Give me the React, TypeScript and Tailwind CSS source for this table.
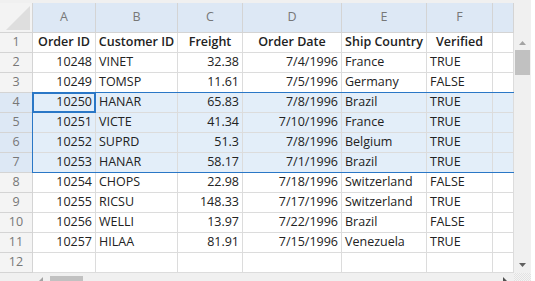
import React from "react";

type Align = "l" | "r" | "c";

const cols = [
  { key: "A", w: "w-[63px]" },
  { key: "B", w: "w-[82px]" },
  { key: "C", w: "w-[65px]" },
  { key: "D", w: "w-[99px]" },
  { key: "E", w: "w-[85px]" },
  { key: "F", w: "w-[66px]" },
  { key: "", w: "w-[21px]" },
];

const aligns: Align[] = ["r", "l", "r", "r", "l", "l", "l"];

const rows: string[][] = [
  ["Order ID", "Customer ID", "Freight", "Order Date", "Ship Country", "Verified", ""],
  ["10248", "VINET", "32.38", "7/4/1996", "France", "TRUE", ""],
  ["10249", "TOMSP", "11.61", "7/5/1996", "Germany", "FALSE", ""],
  ["10250", "HANAR", "65.83", "7/8/1996", "Brazil", "TRUE", ""],
  ["10251", "VICTE", "41.34", "7/10/1996", "France", "TRUE", ""],
  ["10252", "SUPRD", "51.3", "7/8/1996", "Belgium", "TRUE", ""],
  ["10253", "HANAR", "58.17", "7/1/1996", "Brazil", "TRUE", ""],
  ["10254", "CHOPS", "22.98", "7/18/1996", "Switzerland", "FALSE", ""],
  ["10255", "RICSU", "148.33", "7/17/1996", "Switzerland", "TRUE", ""],
  ["10256", "WELLI", "13.97", "7/22/1996", "Brazil", "FALSE", ""],
  ["10257", "HILAA", "81.91", "7/15/1996", "Venezuela", "TRUE", ""],
  ["", "", "", "", "", "", ""],
];

const alignClass = { l: "justify-start pl-[3px]", r: "justify-end pr-[3px]", c: "justify-center" };

function CornerCell() {
  return (
    <div className="w-[33px] h-[30px] shrink-0 bg-[#f3f3f3] border-r border-b border-[#d4d4d4] relative">
      <svg className="absolute right-[2px] bottom-[2px]" width="24" height="24" viewBox="0 0 24 24">
        <polygon points="0,24 24,0 24,24" fill="#dedede" />
      </svg>
    </div>
  );
}

export default function App() {
  return (
    <div className="w-[535px] h-[281px] overflow-hidden bg-white flex flex-col text-[12.5px] text-[#222]" style={{ fontFamily: '"Segoe UI", "Open Sans", "Noto Sans", sans-serif' }}>
      <div className="h-[3px] w-[531px] bg-[#f0f0f0] shrink-0" />
      <div className="flex">
        <div className="flex flex-col w-[514px]">
          {/* column headers */}
          <div className="flex">
            <CornerCell />
            {cols.map((c, i) => (
              <div
                key={i}
                className={`${c.w} h-[30px] shrink-0 bg-[#dde8f5] border-r border-b border-[#d4d4d4] flex items-center justify-center text-[#777]`}
              >
                {c.key}
              </div>
            ))}
          </div>

          {/* body */}
          <div className="relative">
            {rows.map((r, ri) => {
              const n = ri + 1;
              const sel = n >= 4 && n <= 7;
              return (
                <div key={ri} className="flex">
                  <div
                    className={`w-[33px] h-[20px] shrink-0 border-r border-b border-[#d4d4d4] flex items-center justify-center text-[#777] ${
                      sel ? "bg-[#dde8f5]" : "bg-[#f4f4f4]"
                    }`}
                  >
                    {n}
                  </div>
                  {cols.map((c, ci) => (
                    <div
                      key={ci}
                      className={`${c.w} h-[20px] shrink-0 border-r border-b border-[#dcdcdc] flex items-center whitespace-nowrap overflow-hidden ${
                        n === 1 ? "justify-center font-semibold" : alignClass[aligns[ci]]
                      } ${sel ? "bg-[#e3eef9]" : ""}`}
                    >
                      {r[ci]}
                    </div>
                  ))}
                </div>
              );
            })}
            {/* selection range outline, runs on past the right edge */}
            <div className="absolute left-[32px] top-[59px] w-[482px] h-[81px] border-l border-t border-b border-[#2a77c6] pointer-events-none" />
            {/* active cell */}
            <div className="absolute left-[32px] top-[59px] w-[64px] h-[21px] border-2 border-[#2a77c6] pointer-events-none" />
          </div>

          {/* horizontal scrollbar */}
          <div className="h-[9px] bg-[#f0f0f0] relative">
            <svg className="absolute left-[38px] top-[4px]" width="5" height="5" viewBox="0 0 5 5">
              <polygon points="5,0 5,5 0,5" fill="#a3a3a3" />
            </svg>
            <div className="absolute left-[50px] top-[3px] w-[33px] h-[6px] bg-[#c1c1c1]" />
            <svg className="absolute left-[503px] top-[4px]" width="5" height="5" viewBox="0 0 5 5">
              <polygon points="0,0 5,5 0,5" fill="#505050" />
            </svg>
          </div>
        </div>

        {/* vertical scrollbar */}
        <div className="w-[17px] bg-[#f0f0f0] relative">
          <svg className="absolute left-[5px] top-[38px]" width="7" height="4" viewBox="0 0 7 4">
            <polygon points="3.5,0 7,4 0,4" fill="#a3a3a3" />
          </svg>
          <div className="absolute left-[1px] top-[47px] w-[15px] h-[25px] bg-[#c1c1c1]" />
          <svg className="absolute left-[5px] top-[260px]" width="7" height="4" viewBox="0 0 7 4">
            <polygon points="0,0 7,0 3.5,4" fill="#606060" />
          </svg>
          <div className="absolute left-0 top-[270px] w-[17px] h-[9px] bg-[repeating-conic-gradient(#e2e2e2_0%_25%,#f4f4f4_0%_50%)] bg-[length:2px_2px]" />
        </div>
      </div>
    </div>
  );
}
